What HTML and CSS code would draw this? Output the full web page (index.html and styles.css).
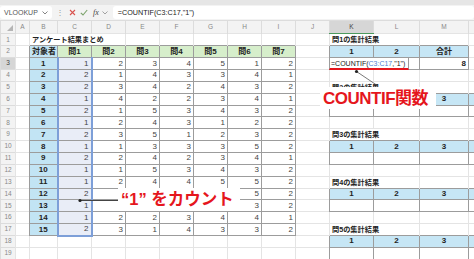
FILE: index.html
```html
<!DOCTYPE html>
<html lang="ja">
<head>
  <meta charset="UTF-8">
  <title>COUNTIF</title>
  <link rel="stylesheet" href="styles.css">
</head>
<body>

  <div class="fbar">
    <div class="namebox">
      <span>VLOOKUP</span>
      <svg class="chev" width="6" height="4" viewBox="0 0 6 4"><polyline points="0.5,0.5 3,3 5.5,0.5" fill="none" stroke="#777" stroke-width="0.9"/></svg>
    </div>
    <span class="dots">⋮</span>
    <svg class="ico" width="7" height="7" viewBox="0 0 7 7"><path d="M1 1 L6 6 M6 1 L1 6" stroke="#d9534f" stroke-width="1.1"/></svg>
    <svg class="ico" width="8" height="7" viewBox="0 0 8 7"><polyline points="0.8,3.8 3,6 7.2,1" fill="none" stroke="#7aa26a" stroke-width="1.1"/></svg>
    <span class="fx">fx</span>
    <svg class="chev" width="6" height="4" viewBox="0 0 6 4"><polyline points="0.5,0.5 3,3 5.5,0.5" fill="none" stroke="#999" stroke-width="0.9"/></svg>
    <div class="finput">=COUNTIF(C3:C17,"1")</div>
  </div>

  <table class="sheet">
    <colgroup>
      <col class="w-rh"><col class="w-a"><col class="w-b">
      <col class="w-q"><col class="w-q"><col class="w-q"><col class="w-q"><col class="w-q"><col class="w-q"><col class="w-q"><col class="w-q">
      <col class="w-k"><col class="w-l"><col class="w-m"><col class="w-n">
    </colgroup>
    <tr class="colhead">
      <td class="corner"><span class="tri"></span></td><td>A</td><td>B</td><td>C</td><td>D</td><td>E</td><td>F</td><td>G</td><td>H</td><td>I</td><td>J</td><td class="on">K</td><td>L</td><td>M</td><td></td>
    </tr>
    <tr>
      <td class="rh">1</td><td></td><td class="lbl">アンケート結果まとめ</td><td class="nl"></td><td class="nl"></td><td></td><td></td><td></td><td></td><td></td><td></td><td class="lbl">問1の集計結果</td><td class="nl"></td><td></td><td></td>
    </tr>
    <tr>
      <td class="rh">2</td><td></td><td class="t hb">対象者</td><td class="t hg">問1</td><td class="t hg">問2</td><td class="t hg">問3</td><td class="t hg">問4</td><td class="t hg">問5</td><td class="t hg">問6</td><td class="t hg">問7</td><td></td><td class="t hk">1</td><td class="t hk">2</td><td class="t hk">合計</td><td></td>
    </tr>
    <tr>
      <td class="rh on">3</td><td></td><td class="t id">1</td><td class="t sel n">1</td><td class="t n">2</td><td class="t n">3</td><td class="t n">4</td><td class="t n">5</td><td class="t n">1</td><td class="t n">2</td><td></td>
      <td class="t edit"><span class="formula">=COUNTIF(<span class="ref">C3:C17</span>,"1")</span></td><td class="t"></td><td class="t n total">8</td><td></td>
    </tr>
    <tr>
      <td class="rh">4</td><td></td><td class="t id">2</td><td class="t sel n">2</td><td class="t n">1</td><td class="t n">4</td><td class="t n">3</td><td class="t n">3</td><td class="t n">4</td><td class="t n">1</td><td></td><td></td><td></td><td></td><td></td>
    </tr>
    <tr>
      <td class="rh">5</td><td></td><td class="t id">3</td><td class="t sel n">2</td><td class="t n">3</td><td class="t n">4</td><td class="t n">2</td><td class="t n">4</td><td class="t n">3</td><td class="t n">2</td><td></td><td class="lbl">問2の集計結果</td><td class="nl"></td><td></td><td></td>
    </tr>
    <tr>
      <td class="rh">6</td><td></td><td class="t id">4</td><td class="t sel n">1</td><td class="t n">4</td><td class="t n">2</td><td class="t n">2</td><td class="t n">3</td><td class="t n">4</td><td class="t n">1</td><td></td><td class="t hk"></td><td class="t hk"></td><td class="t hk">3</td><td class="t hk"></td>
    </tr>
    <tr>
      <td class="rh">7</td><td></td><td class="t id">5</td><td class="t sel n">2</td><td class="t n">1</td><td class="t n">5</td><td class="t n">3</td><td class="t n">4</td><td class="t n">3</td><td class="t n">2</td><td></td><td class="t"></td><td class="t"></td><td class="t"></td><td class="t"></td>
    </tr>
    <tr>
      <td class="rh">8</td><td></td><td class="t id">6</td><td class="t sel n">1</td><td class="t n">2</td><td class="t n">4</td><td class="t n">3</td><td class="t n">1</td><td class="t n">2</td><td class="t n">2</td><td></td><td></td><td></td><td></td><td></td>
    </tr>
    <tr>
      <td class="rh">9</td><td></td><td class="t id">7</td><td class="t sel n">2</td><td class="t n">3</td><td class="t n">5</td><td class="t n">1</td><td class="t n">2</td><td class="t n">3</td><td class="t n">2</td><td></td><td class="lbl">問3の集計結果</td><td class="nl"></td><td></td><td></td>
    </tr>
    <tr>
      <td class="rh">10</td><td></td><td class="t id">8</td><td class="t sel n">1</td><td class="t n">1</td><td class="t n">3</td><td class="t n">3</td><td class="t n">3</td><td class="t n">5</td><td class="t n">2</td><td></td><td class="t hk">1</td><td class="t hk">2</td><td class="t hk">3</td><td class="t hk"></td>
    </tr>
    <tr>
      <td class="rh">11</td><td></td><td class="t id">9</td><td class="t sel n">2</td><td class="t n">2</td><td class="t n">4</td><td class="t n">2</td><td class="t n">3</td><td class="t n">4</td><td class="t n">1</td><td></td><td class="t"></td><td class="t"></td><td class="t"></td><td class="t"></td>
    </tr>
    <tr>
      <td class="rh">12</td><td></td><td class="t id">10</td><td class="t sel n">1</td><td class="t n">1</td><td class="t n">5</td><td class="t n">3</td><td class="t n">4</td><td class="t n">3</td><td class="t n">2</td><td></td><td></td><td></td><td></td><td></td>
    </tr>
    <tr>
      <td class="rh">13</td><td></td><td class="t id">11</td><td class="t sel n">1</td><td class="t n">2</td><td class="t n">4</td><td class="t n">4</td><td class="t n">5</td><td class="t n">5</td><td class="t n">2</td><td></td><td class="lbl">問4の集計結果</td><td class="nl"></td><td></td><td></td>
    </tr>
    <tr>
      <td class="rh">14</td><td></td><td class="t id">12</td><td class="t sel n">2</td><td class="t n"></td><td class="t n"></td><td class="t n"></td><td class="t n"></td><td class="t n">5</td><td class="t n">2</td><td></td><td class="t hk">1</td><td class="t hk">2</td><td class="t hk">3</td><td class="t hk"></td>
    </tr>
    <tr>
      <td class="rh">15</td><td></td><td class="t id">13</td><td class="t sel n">1</td><td class="t n"></td><td class="t n"></td><td class="t n"></td><td class="t n"></td><td class="t n">3</td><td class="t n">2</td><td></td><td class="t"></td><td class="t"></td><td class="t"></td><td class="t"></td>
    </tr>
    <tr>
      <td class="rh">16</td><td></td><td class="t id">14</td><td class="t sel n">1</td><td class="t n">2</td><td class="t n">2</td><td class="t n">3</td><td class="t n">4</td><td class="t n">4</td><td class="t n">1</td><td></td><td></td><td></td><td></td><td></td>
    </tr>
    <tr>
      <td class="rh">17</td><td></td><td class="t id">15</td><td class="t sel last n">2</td><td class="t n">3</td><td class="t n">1</td><td class="t n">4</td><td class="t n">3</td><td class="t n">3</td><td class="t n">2</td><td></td><td class="lbl">問5の集計結果</td><td class="nl"></td><td></td><td></td>
    </tr>
    <tr>
      <td class="rh">18</td><td></td><td></td><td></td><td></td><td></td><td></td><td></td><td></td><td></td><td></td><td class="t hk">1</td><td class="t hk">2</td><td class="t hk">3</td><td class="t hk"></td>
    </tr>
    <tr>
      <td class="rh">19</td><td></td><td></td><td></td><td></td><td></td><td></td><td></td><td></td><td></td><td></td><td class="t"></td><td class="t"></td><td class="t"></td><td class="t"></td>
    </tr>
  </table>

  <!-- 注釈 -->
  <svg class="marks" width="474" height="259" viewBox="0 0 474 259">
    <line x1="356.5" y1="71.5" x2="378" y2="86" stroke="#555" stroke-width="0.8"/>
    <circle cx="356.5" cy="71.5" r="1.6" fill="#222"/>
    <line x1="80" y1="200.5" x2="119" y2="200.5" stroke="#444" stroke-width="1"/>
    <circle cx="80" cy="200.5" r="1.6" fill="#222"/>
  </svg>
  <div class="note note-func">COUNTIF関数</div>
  <div class="note note-count">“1” をカウント</div>

</body>
</html>
```

FILE: styles.css
```css
* {
  box-sizing: border-box;
}

body {
  margin: 0;
  width: 474px;
  height: 259px;
  overflow: hidden;
  position: relative;
  background: #fff;
  font-family: "Liberation Sans", "Noto Sans CJK JP", sans-serif;
  color: #222;
}

/* 数式バー */
.fbar {
  height: 20px;
  display: flex;
  align-items: center;
  background: #f3f3f3;
  border-top: 5px solid #e6e6e6;
  font-size: 7px;
  color: #555;
}

.namebox {
  width: 52px;
  height: 13px;
  display: flex;
  align-items: center;
  justify-content: space-between;
  padding: 0 4px;
  background: #fff;
  border-radius: 3px;
}

.dots {
  margin: 0 5px 0 4px;
  color: #999;
  font-size: 8px;
}

.ico {
  margin-right: 4px;
}

.fx {
  font-family: "Liberation Serif", serif;
  font-style: italic;
  font-size: 8px;
  color: #444;
  margin: 0 3px 0 1px;
}

.finput {
  flex: 1;
  height: 13px;
  margin-left: 5px;
  padding-left: 5px;
  display: flex;
  align-items: center;
  background: #fff;
  border-radius: 3px;
  color: #222;
  font-size: 7.2px;
}

/* シート */
.sheet {
  border-collapse: collapse;
  table-layout: fixed;
  width: 474px;
}

.w-rh { width: 15px; }
.w-a { width: 14px; }
.w-b { width: 28px; }
.w-q { width: 34px; }
.w-k { width: 44px; }
.w-l { width: 46px; }
.w-m { width: 49px; }
.w-n { width: 6px; }

.sheet tr {
  height: 11.86px;
}

.sheet td {
  padding: 0 2px;
  border-left: 1px solid #e4e4e4;
  border-top: 1px solid #e4e4e4;
  font-size: 8px;
  line-height: 1;
  white-space: nowrap;
  overflow: visible;
}

.sheet .colhead {
  height: 13.4px;
}

.colhead td {
  background: #f3f3f3;
  color: #888;
  font-size: 6.5px;
  text-align: center;
  border-color: #dcdcdc;
}

.colhead td.on {
  background: #d6d6d6;
  color: #444;
  border-bottom: 1px solid #4c9a5d;
}

.corner {
  position: relative;
}

.tri {
  position: absolute;
  right: 2px;
  bottom: 2px;
  border-left: 6px solid transparent;
  border-bottom: 6px solid #b5b5b5;
}

.sheet td.rh {
  padding: 0;
  background: #f3f3f3;
  color: #888;
  font-size: 6.5px;
  text-align: center;
  border-color: #dcdcdc;
}

.sheet td.rh.on {
  background: #d6d6d6;
  color: #444;
}

.sheet td.nl {
  border-left: none;
}

.sheet td.lbl {
  font-size: 7.2px;
  font-weight: bold;
  color: #222;
}

/* 表 */
.sheet td.t {
  border: 1px solid #9c9c9c;
}

.hb,
.id {
  background: #c2e4f4;
  font-weight: bold;
  text-align: center;
}

.hg {
  background: #d6eecb;
  font-weight: bold;
  text-align: center;
}

.hk {
  background: #c6e6f5;
  font-weight: bold;
  text-align: center;
}

.n {
  text-align: right;
  color: #444;
}

.total {
  font-weight: bold;
  color: #222;
}

.sheet td.sel {
  background: #e9edf7;
  border-left: 2px solid #7d9fd8;
  border-right: 2px solid #7d9fd8;
}

.sheet td.sel.last {
  border-bottom: 2px solid #7d9fd8;
}

.edit {
  position: relative;
}

.formula {
  position: absolute;
  left: -1px;
  top: -1px;
  bottom: -1px;
  width: 80px;
  padding-left: 1px;
  display: flex;
  align-items: center;
  background: #fff;
  border: 1px solid #9c9c9c;
  border-bottom: 2px solid #e5161d;
  font-size: 7px;
  color: #222;
}

.ref {
  color: #4d7fd2;
}

/* 注釈 */
.marks {
  position: absolute;
  left: 0;
  top: 0;
  pointer-events: none;
}

.note {
  position: absolute;
  background: #fff;
  color: #e5161d;
  font-weight: bold;
  line-height: 1;
  display: flex;
  align-items: center;
}

.note-func {
  left: 320px;
  top: 87px;
  width: 116px;
  height: 22px;
  padding-left: 3px;
  font-size: 17px;
  letter-spacing: -0.5px;
}

.note-count {
  left: 118px;
  top: 188px;
  width: 122px;
  height: 23px;
  padding-left: 3px;
  font-size: 16.5px;
}
```
